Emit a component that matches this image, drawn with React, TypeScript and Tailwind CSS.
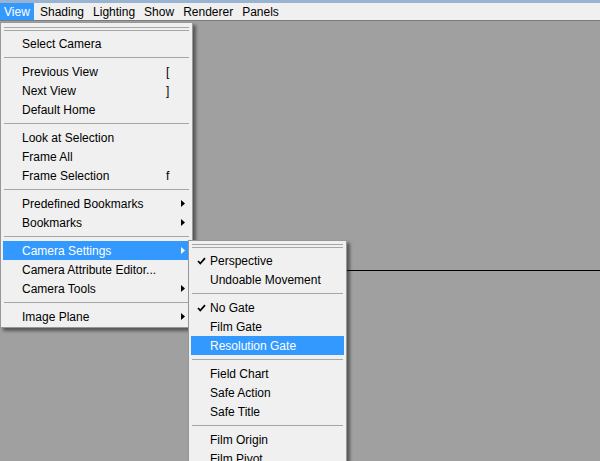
import React from 'react';

type Entry =
  | { kind: 'sep' }
  | { kind: 'item'; label: string; hotkey?: string; sub?: boolean; checked?: boolean; active?: boolean };

const viewMenu: Entry[] = [
  { kind: 'item', label: 'Select Camera' },
  { kind: 'sep' },
  { kind: 'item', label: 'Previous View', hotkey: '[' },
  { kind: 'item', label: 'Next View', hotkey: ']' },
  { kind: 'item', label: 'Default Home' },
  { kind: 'sep' },
  { kind: 'item', label: 'Look at Selection' },
  { kind: 'item', label: 'Frame All' },
  { kind: 'item', label: 'Frame Selection', hotkey: 'f' },
  { kind: 'sep' },
  { kind: 'item', label: 'Predefined Bookmarks', sub: true },
  { kind: 'item', label: 'Bookmarks', sub: true },
  { kind: 'sep' },
  { kind: 'item', label: 'Camera Settings', sub: true, active: true },
  { kind: 'item', label: 'Camera Attribute Editor...' },
  { kind: 'item', label: 'Camera Tools', sub: true },
  { kind: 'sep' },
  { kind: 'item', label: 'Image Plane', sub: true },
];

const cameraSettings: Entry[] = [
  { kind: 'item', label: 'Perspective', checked: true },
  { kind: 'item', label: 'Undoable Movement' },
  { kind: 'sep' },
  { kind: 'item', label: 'No Gate', checked: true },
  { kind: 'item', label: 'Film Gate' },
  { kind: 'item', label: 'Resolution Gate', active: true },
  { kind: 'sep' },
  { kind: 'item', label: 'Field Chart' },
  { kind: 'item', label: 'Safe Action' },
  { kind: 'item', label: 'Safe Title' },
  { kind: 'sep' },
  { kind: 'item', label: 'Film Origin' },
  { kind: 'item', label: 'Film Pivot' },
];

function Check() {
  return (
    <svg width="9" height="8" viewBox="0 0 9 8" className="shrink-0">
      <path d="M1 4 L3.3 6.5 L8 1.2" fill="none" stroke="currentColor" strokeWidth="1.8" />
    </svg>
  );
}

function Arrow() {
  return (
    <svg width="4" height="7" viewBox="0 0 4 7" className="shrink-0">
      <path d="M0 0 L4 3.5 L0 7 Z" fill="currentColor" />
    </svg>
  );
}

function TearOff({ h }: { h: string }) {
  return (
    <div className={`flex flex-col justify-center gap-[2px] px-[3px] ${h}`}>
      <div className="h-px bg-[#a6a6a6]" />
      <div className="h-px bg-[#a6a6a6]" />
    </div>
  );
}

function MenuRows({ entries }: { entries: Entry[] }) {
  return (
    <>
      {entries.map((e, i) =>
        e.kind === 'sep' ? (
          <div key={i} className="flex h-[9px] items-center px-[3px]">
            <div className="h-px w-full bg-[#a6a6a6]" />
          </div>
        ) : (
          <div
            key={i}
            className={`relative flex h-[19px] items-center ${e.active ? 'text-white' : 'text-black'}`}
          >
            {e.active && <span className="absolute inset-y-0 left-[2px] right-[2px] bg-[#3399ff]" />}
            {e.checked && (
              <span className="absolute left-[8px] top-[6px]">
                <Check />
              </span>
            )}
            <span className="relative pl-[21px]">{e.label}</span>
            {e.hotkey && <span className="absolute left-[165px]">{e.hotkey}</span>}
            {e.sub && (
              <span className="absolute right-[7px] top-[6px]">
                <Arrow />
              </span>
            )}
          </div>
        ),
      )}
    </>
  );
}

export default function App() {
  const bar = ['View', 'Shading', 'Lighting', 'Show', 'Renderer', 'Panels'];

  return (
    <div
      className="relative flex h-[461px] w-[600px] flex-col overflow-hidden bg-[#a0a0a0] text-[12px]"
      style={{ fontFamily: '"Liberation Sans", Arial, sans-serif' }}
    >
      <div className="h-[3px] bg-[#99b4d1]" />

      {/* menu bar */}
      <div className="flex h-[18px] items-stretch border-b border-[#7a7a7a] bg-[#f0f0f0]">
        {bar.map((name, i) => (
          <div
            key={name}
            className={`flex items-center pl-[4px] pr-[3px] ${
              i === 0 ? 'mr-[2px] w-[34px] bg-[#3399ff] text-white' : 'mr-[2px] text-black'
            }`}
          >
            {name}
          </div>
        ))}
      </div>

      {/* viewport */}
      <div className="flex-1">
        <div className="mt-[249px] h-px bg-black" />
      </div>

      {/* View dropdown */}
      <div className="absolute left-0 top-[22px] w-[193px] border border-[#979797] bg-[#f0f0f0] pb-px shadow-[3px_3px_3px_rgba(0,0,0,0.45)]">
        <TearOff h="h-[11px]" />
        <MenuRows entries={viewMenu} />
      </div>

      {/* Camera Settings submenu */}
      <div className="absolute left-[188px] top-[240px] w-[159px] border border-[#979797] bg-[#f0f0f0] shadow-[3px_3px_3px_rgba(0,0,0,0.45)]">
        <TearOff h="h-[10px]" />
        <MenuRows entries={cameraSettings} />
      </div>
    </div>
  );
}
